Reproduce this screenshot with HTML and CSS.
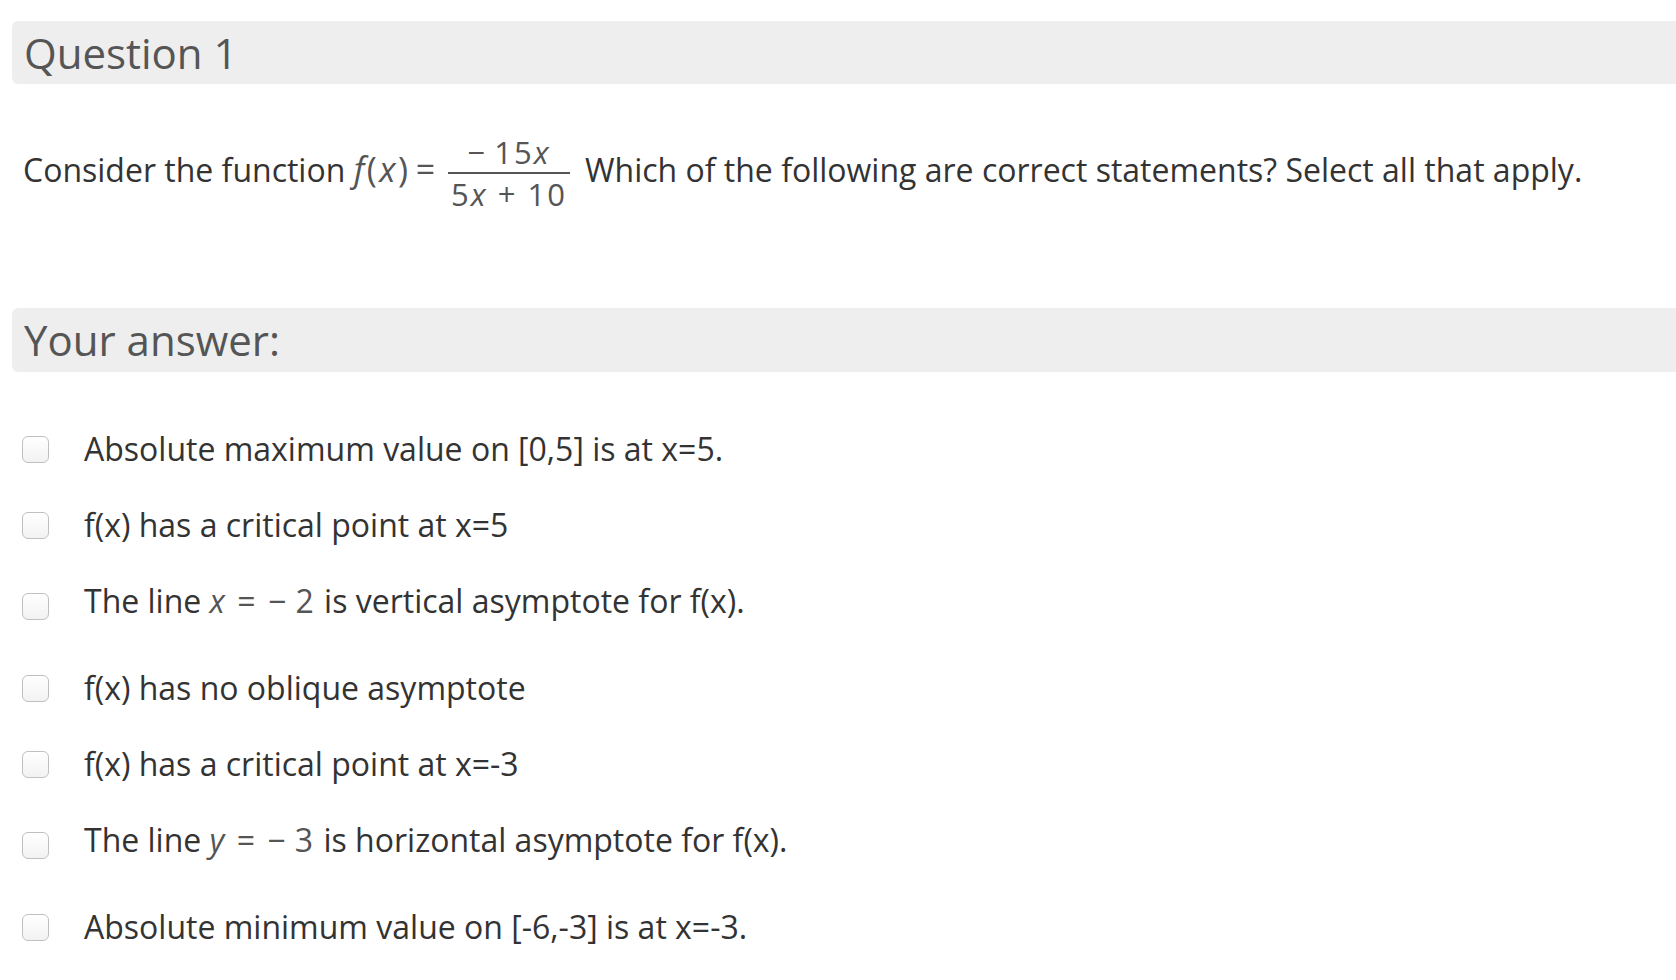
FILE: index.html
```
<!DOCTYPE html>
<html lang="en">
<head>
    <meta charset="UTF-8">
    <title>Question 1</title>
    <link rel="stylesheet" href="styles.css">
</head>
<body>
    <div class="quiz">
        <h2 class="section-head">Question 1</h2>

        <p class="question">Consider the function <span class="math q-math"><i>f</i>(<i>x</i>)<span class="eq">=</span><span class="frac"><span class="num">−&thinsp;15<i>x</i></span><span class="den">5<i>x</i> + 10</span></span></span>Which of the following are correct statements? Select all that apply.</p>

        <h2 class="section-head answer-head">Your answer:</h2>

        <ul class="options">
            <li class="opt"><span class="box"></span><span>Absolute maximum value on [0,5] is at x=5.</span></li>
            <li class="opt"><span class="box"></span><span>f(x) has a critical point at x=5</span></li>
            <li class="opt tall"><span class="box"></span><span>The line <span class="math"><i>x</i> = −&thinsp;2</span> is vertical asymptote for f(x).</span></li>
            <li class="opt"><span class="box"></span><span>f(x) has no oblique asymptote</span></li>
            <li class="opt"><span class="box"></span><span>f(x) has a critical point at x=-3</span></li>
            <li class="opt tall"><span class="box"></span><span>The line <span class="math"><i>y</i> = −&thinsp;3</span> is horizontal asymptote for f(x).</span></li>
            <li class="opt"><span class="box"></span><span>Absolute minimum value on [-6,-3] is at x=-3.</span></li>
        </ul>
    </div>
</body>
</html>
```

FILE: styles.css
```
* {
    box-sizing: border-box;
    margin: 0;
    padding: 0;
}

html, body {
    overflow: hidden;
}

body {
    font-family: 'Open Sans', 'Noto Sans', sans-serif;
    color: #333;
    background: #fff;
}

.quiz {
    padding: 21px 0 0 12px;
}

.section-head {
    background: #eee;
    color: #555;
    font-weight: normal;
    font-size: 42px;
    line-height: 63px;
    padding-left: 12px;
    border-radius: 6px 0 0 6px;
    margin-right: -30px;
}

.answer-head {
    margin-top: 98px;
    line-height: 64px;
}

.question {
    margin-top: 52px;
    padding-left: 11px;
    font-size: 32px;
    line-height: 1.4;
}

.math {
    color: #555;
    letter-spacing: 2px;
}

.math i {
    font-style: italic;
}

.q-math {
    font-size: 34px;
    letter-spacing: 2.5px;
}

.eq {
    margin: 0 8px 0 5px;
    letter-spacing: 0;
}

.frac {
    display: inline-block;
    vertical-align: middle;
    text-align: center;
    font-size: 31px;
    letter-spacing: 2px;
    margin: 0 15px 0 5px;
}

.num,
.den {
    display: block;
    line-height: 32px;
    padding: 0 3px;
}

.num {
    padding-bottom: 4px;
    border-bottom: 2px solid #555;
}

.den {
    padding-top: 4px;
}

.options {
    list-style: none;
    margin-top: 57px;
}

.opt {
    display: flex;
    align-items: flex-start;
    font-size: 32px;
    line-height: 40px;
    margin-bottom: 36px;
}

.opt.tall {
    margin-bottom: 47px;
}

.box {
    flex: none;
    width: 27px;
    height: 27px;
    margin: 7px 35px 0 10px;
    border: 1px solid #c0c0c0;
    border-radius: 6px;
    background: linear-gradient(#fff, #f2f2f2);
}

.opt.tall .box {
    margin-top: 12px;
}
```
